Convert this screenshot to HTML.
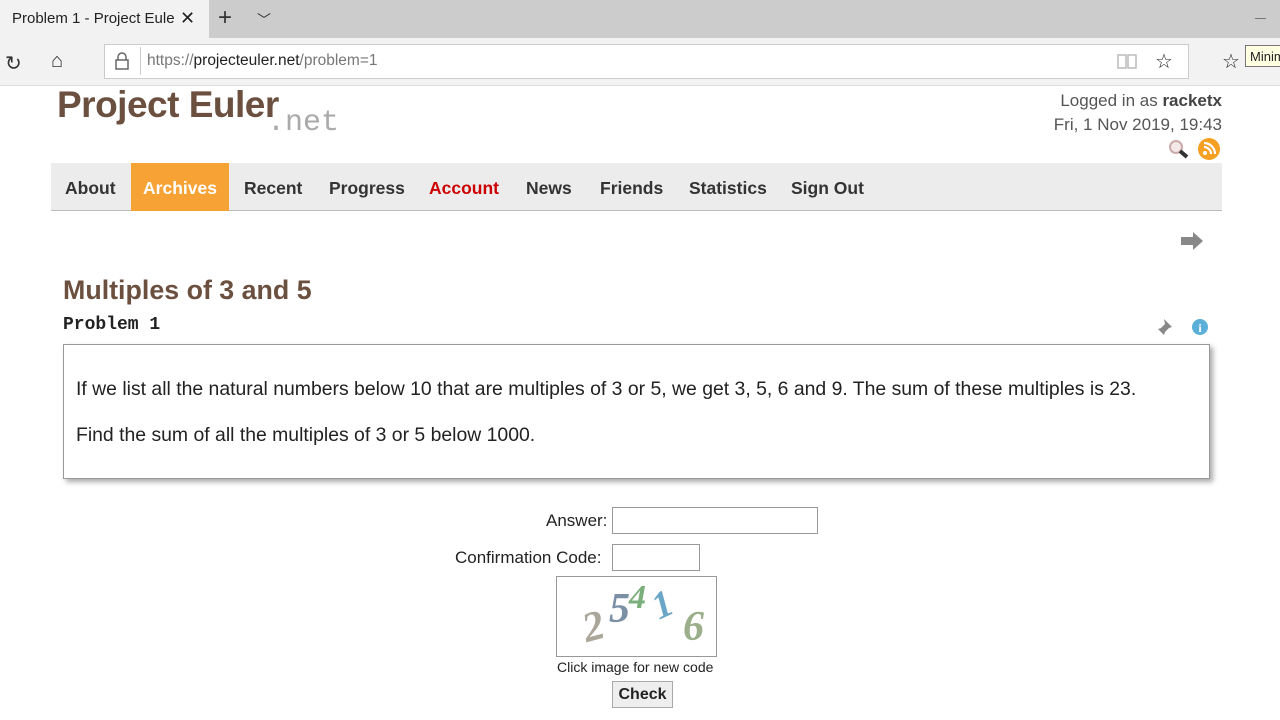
<!DOCTYPE html>
<html><head><meta charset="utf-8"><style>
*{box-sizing:border-box;margin:0;padding:0}
body{width:1280px;height:720px;overflow:hidden;background:#fff;font-family:"Liberation Sans",sans-serif;position:relative;color:#222}
.abs{position:absolute}
#tabbar{left:0;top:0;width:1280px;height:38px;background:#ccc}
#tab{left:0;top:0;width:209px;height:38px;background:#f2f2f2;font-size:15px;color:#222;padding:10px 0 0 12px}
#toolbar{left:0;top:38px;width:1280px;height:48px;background:#f2f2f2;border-bottom:1px solid #ddd}
#url{left:104px;top:44px;width:1085px;height:35px;background:#fff;border:1px solid #ccc}
#nav{left:51px;top:163px;width:1171px;height:48px;background:#ececec;border-bottom:1px solid #bbb}
#nav span{position:absolute;top:0;height:48px;line-height:50px;font-weight:bold;font-size:17.5px;color:#333}
#box{left:63px;top:344px;width:1147px;height:135px;border:1px solid #999;box-shadow:3px 3px 5px #aaa;font-size:19.4px;color:#222}
input{position:absolute;border:1px solid #999;background:#fff}
</style></head><body>
<div id="tabbar" class="abs"></div>
<div id="tab" class="abs">Problem 1 - Project Eule<span style="position:absolute;left:180px;top:8px;font-size:18px">✕</span></div>
<div class="abs" style="left:218px;top:4px;font-size:24px;color:#333">+</div>
<div class="abs" style="left:257px;top:10px;font-size:14px;color:#333">﹀</div>
<div class="abs" style="left:1255px;top:18px;width:11px;height:1px;background:#777"></div>
<div id="toolbar" class="abs"></div>
<div class="abs" style="left:5px;top:51px;font-size:20px;color:#333">↻</div>
<div class="abs" style="left:51px;top:50px;font-size:20px;color:#333">⌂</div>
<div id="url" class="abs"></div>
<svg class="abs" style="left:114px;top:52px" width="16" height="18"><path d="M4 8V5a4 4 0 0 1 8 0v3" stroke="#666" stroke-width="1.5" fill="none"/><rect x="2" y="8" width="12" height="9" fill="none" stroke="#666" stroke-width="1.5"/></svg>
<div class="abs" style="left:140px;top:47px;width:1px;height:28px;background:#ccc"></div>
<div class="abs" style="left:147px;top:52px;font-size:15.5px;color:#777">https://<span style="color:#222">projecteuler.net</span>/problem=1</div>
<svg class="abs" style="left:1117px;top:53px" width="20" height="16"><path d="M1 2h8v13H1zM11 2h8v13h-8z" fill="none" stroke="#bbb" stroke-width="1.5"/></svg>
<div class="abs" style="left:1155px;top:49px;font-size:20px;color:#222">☆</div>
<div class="abs" style="left:1222px;top:49px;font-size:20px;color:#222">☆</div>
<div class="abs" style="left:1245px;top:45px;width:40px;height:22px;background:#ffffe1;border:1px solid #777;font-size:13px;padding:3px 4px">Minimize</div>
<div class="abs" style="left:57px;top:84px;font-size:37px;font-weight:bold;color:#6b4f3f;letter-spacing:-0.5px">Project Euler</div>
<div class="abs" style="left:267px;top:106px;font-size:30px;color:#aaa;font-family:'Liberation Mono',monospace">.net</div>
<div class="abs" style="right:58px;top:89px;font-size:17px;color:#555;text-align:right;line-height:24px">Logged in as <b style="color:#444">racketx</b><br>Fri, 1 Nov 2019, 19:43</div>
<svg class="abs" style="left:1167px;top:138px" width="26" height="22"><circle cx="9" cy="9" r="6" fill="#f4e8e8" stroke="#caa" stroke-width="2"/><line x1="13" y1="13" x2="20" y2="19" stroke="#333" stroke-width="4"/></svg>
<svg class="abs" style="left:1197px;top:137px" width="24" height="24"><circle cx="12" cy="12" r="11" fill="#f5a020"/><circle cx="8" cy="16" r="2" fill="#fff"/><path d="M7 10a7 7 0 0 1 7 7M7 6a11 11 0 0 1 11 11" stroke="#fff" stroke-width="2.2" fill="none"/></svg>
<div id="nav" class="abs">
<span style="left:14px">About</span>
<span style="left:80px;width:98px;background:#f7a234;color:#fff;text-align:center">Archives</span>
<span style="left:193px">Recent</span>
<span style="left:278px">Progress</span>
<span style="left:378px;color:#c00">Account</span>
<span style="left:475px">News</span>
<span style="left:549px">Friends</span>
<span style="left:638px">Statistics</span>
<span style="left:740px">Sign Out</span>
</div>
<svg class="abs" style="left:1180px;top:231px" width="24" height="20"><path d="M1 6h12V1l10 9-10 9v-5H1z" fill="#888"/></svg>
<div class="abs" style="left:63px;top:275px;font-size:26.8px;font-weight:bold;color:#6b4f3f">Multiples of 3 and 5</div>
<div class="abs" style="left:63px;top:315px;font-size:18px;font-weight:bold;font-family:'Liberation Mono',monospace;color:#222">Problem 1</div>
<svg class="abs" style="left:1154px;top:317px" width="20" height="20"><path d="M10 2l8 8-3 1-4 4-1 3-3-3-5 5 5-5-3-3 3-1 4-4z" fill="#888"/></svg>
<svg class="abs" style="left:1191px;top:318px" width="18" height="18"><circle cx="9" cy="9" r="8" fill="#5ab0d8"/><text x="9" y="14" font-size="12" font-weight="bold" fill="#fff" text-anchor="middle" font-family="Liberation Serif">i</text></svg>
<div id="box" class="abs"><div style="position:absolute;left:12px;top:33px">If we list all the natural numbers below 10 that are multiples of 3 or 5, we get 3, 5, 6 and 9. The sum of these multiples is 23.</div><div style="position:absolute;left:12px;top:79px">Find the sum of all the multiples of 3 or 5 below 1000.</div></div>
<div class="abs" style="left:546px;top:511px;font-size:17px">Answer:</div>
<input style="left:612px;top:507px;width:206px;height:27px">
<div class="abs" style="left:455px;top:548px;font-size:17px">Confirmation Code:</div>
<input style="left:612px;top:544px;width:88px;height:27px">
<div class="abs" style="left:556px;top:576px;width:161px;height:81px;border:1px solid #999;font-family:'Liberation Serif',serif;font-style:italic;font-weight:bold;font-size:42px">
<span class="abs" style="left:26px;top:26px;color:#aaa69a;transform:rotate(-15deg)">2</span>
<span class="abs" style="left:52px;top:8px;color:#7b8fa5">5</span>
<span class="abs" style="left:72px;top:2px;font-size:34px;color:#7aae7a">4</span>
<span class="abs" style="left:96px;top:6px;font-size:38px;color:#6aa6c8;transform:rotate(-25deg)">1</span>
<span class="abs" style="left:126px;top:26px;color:#9aaf8a">6</span>
</div>
<div class="abs" style="left:557px;top:659px;font-size:14px;color:#222">Click image for new code</div>
<div class="abs" style="left:612px;top:681px;width:61px;height:27px;background:#eee;border:1px solid #aaa;font-weight:bold;font-size:16px;text-align:center;line-height:25px">Check</div>
</body></html>
